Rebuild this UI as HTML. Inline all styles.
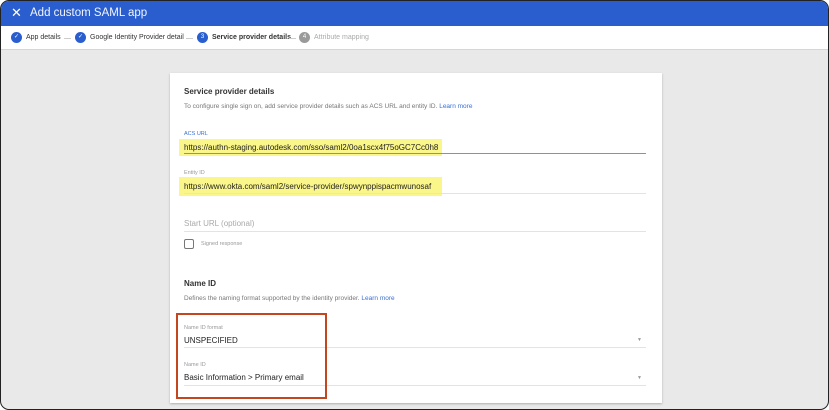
<!DOCTYPE html>
<html><head><style>
*{margin:0;padding:0;box-sizing:border-box}
body{width:829px;height:410px;overflow:hidden;background:#fff;font-family:"Liberation Sans",sans-serif;position:relative}
.frame{position:absolute;left:0;top:0;width:829px;height:410px;border:1.5px solid #222;border-radius:9px;overflow:hidden;background:#e9e9e9}
.hdr{position:absolute;left:0;top:0;width:100%;height:25px;background:#2a5ecf}
.hdr .x{position:absolute;left:10px;top:4px;color:#fff;font-size:13px}
.hdr .t{position:absolute;left:29px;top:6px;color:#f2f5fc;font-size:11.5px}
.step{position:absolute;left:0;top:25px;width:100%;height:24px;background:#fff;border-bottom:1px solid #d6d6d6;font-size:7px;color:#333}
.step span{position:absolute;top:8px;white-space:nowrap}
.c{position:absolute;top:6px;width:11px;height:11px;border-radius:50%;background:#2a5ecf;color:#fff;font-size:6px;text-align:center;line-height:11px}
.ln{position:absolute;top:12px;height:1px;background:#ccc}
.card{position:absolute;left:169px;top:72px;width:492px;height:330px;background:#fff;box-shadow:0 1px 2px rgba(0,0,0,.25)}
.a{position:absolute;white-space:nowrap}
.h{font-size:8px;color:#333;font-weight:bold}
.s{font-size:6.5px;color:#777}
.lk{color:#3a6fd6}
.lab{font-size:5.5px;color:#999}
.v{font-size:8px;color:#222}
.hl{position:absolute;background:#fbf68a}
.ul{position:absolute;height:1px;background:#e3e3e3}
.dd{position:absolute;font-size:5px;color:#999}
</style></head><body>
<div class="frame">
<div class="hdr"><div class="x">✕</div><div class="t">Add custom SAML app</div></div>
<div class="step">
<div class="c" style="left:10px">✓</div><span style="left:25px">App details</span>
<div class="ln" style="left:63px;width:7px"></div>
<div class="c" style="left:74px">✓</div><span style="left:89px">Google Identity Provider detail</span>
<div class="ln" style="left:185px;width:7px"></div>
<div class="c" style="left:196px">3</div><span style="left:211px;font-weight:bold">Service provider details</span>
<div class="ln" style="left:288px;width:7px"></div>
<div class="c" style="left:298px;background:#9a9a9a">4</div><span style="left:313px;color:#aaa">Attribute mapping</span>
</div>
<div class="card">
<div class="a h" style="left:14px;top:14px">Service provider details</div>
<div class="a s" style="left:14px;top:30px">To configure single sign on, add service provider details such as ACS URL and entity ID. <span class="lk">Learn more</span></div>
<div class="a lab" style="left:14px;top:58px;color:#3a6fd6">ACS URL</div>
<div class="hl" style="left:9px;top:66px;width:263px;height:17px"></div>
<div class="a v" style="left:14px;top:70px">https://authn-staging.autodesk.com/sso/saml2/0oa1scx4f75oGC7Cc0h8</div>
<div class="ul" style="left:14px;top:80px;width:462px;background:#6f93e0"></div>
<div class="a lab" style="left:14px;top:97px">Entity ID</div>
<div class="hl" style="left:9px;top:104px;width:263px;height:19px"></div>
<div class="a v" style="left:14px;top:109px">https://www.okta.com/saml2/service-provider/spwynppispacmwunosaf</div>
<div class="ul" style="left:14px;top:120px;width:462px"></div>
<div class="a" style="left:14px;top:146px;font-size:8px;color:#aaa">Start URL (optional)</div>
<div class="ul" style="left:14px;top:158px;width:462px"></div>
<div class="a" style="left:14px;top:166px;width:10px;height:10px;border:1.2px solid #777;border-radius:2px"></div>
<div class="a lab" style="left:31px;top:168px">Signed response</div>
<div class="a h" style="left:14px;top:206px">Name ID</div>
<div class="a s" style="left:14px;top:222px">Defines the naming format supported by the identity provider. <span class="lk">Learn more</span></div>
<div class="a lab" style="left:14px;top:252px">Name ID format</div>
<div class="a v" style="left:14px;top:263px">UNSPECIFIED</div>
<div class="dd" style="left:467px;top:264px">▼</div>
<div class="ul" style="left:14px;top:274px;width:462px"></div>
<div class="a lab" style="left:14px;top:289px">Name ID</div>
<div class="a v" style="left:14px;top:300px">Basic Information &gt; Primary email</div>
<div class="dd" style="left:467px;top:302px">▼</div>
<div class="ul" style="left:14px;top:312px;width:462px"></div>
<div class="a" style="left:6px;top:240px;width:151px;height:86px;border:2px solid #c4461f"></div>
</div>
</div>
</body></html>
